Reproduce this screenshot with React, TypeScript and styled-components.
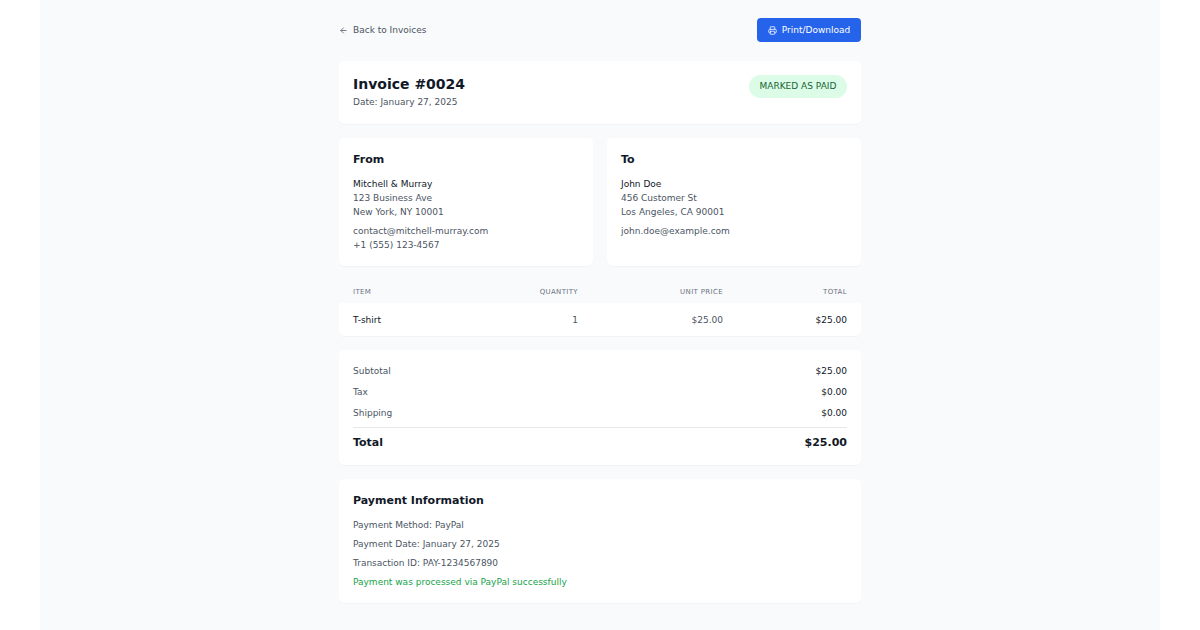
import React from "react";
import styled, { createGlobalStyle } from "styled-components";
import { ArrowLeft, Printer } from "lucide-react";

const GlobalStyle = createGlobalStyle`
  *, *::before, *::after { box-sizing: border-box; }
  body {
    margin: 0;
    background: #ffffff;
    color: #111827;
    font-family: "DejaVu Sans", sans-serif;
    font-size: 9px;
    line-height: 14px;
  }
  h1, h2, p, dl, dd, dt, address { margin: 0; font-style: normal; }
`;

const Page = styled.div`
  max-width: 1120px;
  min-height: 100vh;
  margin: 0 auto;
  padding: 18px 14px;
  background: #f9fafc;
`;

const Content = styled.main`
  display: flex;
  flex-direction: column;
  gap: 14px;
  max-width: 522px;
  margin: 0 auto;
`;

const Toolbar = styled.nav`
  display: flex;
  align-items: center;
  justify-content: space-between;
  margin-bottom: 5px;
`;

const BackLink = styled.a`
  display: inline-flex;
  align-items: center;
  gap: 5px;
  color: #4b5563;
  text-decoration: none;
`;

const PrintButton = styled.button`
  display: inline-flex;
  align-items: center;
  justify-content: center;
  gap: 5px;
  min-width: 104px;
  height: 24px;
  padding: 0 9px;
  border: 0;
  border-radius: 4px;
  background: #2563eb;
  color: #ffffff;
  font: inherit;
  cursor: pointer;
`;

const Card = styled.section`
  padding: 14px;
  border-radius: 5px;
  background: #ffffff;
  box-shadow: 0 1px 1px rgba(0, 0, 0, 0.03);
`;

const HeaderCard = styled(Card)`
  display: flex;
  align-items: flex-start;
  justify-content: space-between;
`;

const Title = styled.h1`
  font-size: 14px;
  line-height: 19px;
  font-weight: 700;
`;

const Muted = styled.p`
  color: #4b5563;
`;

const DateLine = styled(Muted)`
  padding: 1px 0;
`;

const Badge = styled.span`
  min-width: 98px;
  height: 23px;
  padding: 0 9px;
  border-radius: 12px;
  background: #dcfce7;
  color: #166534;
  line-height: 23px;
  text-align: center;
`;

const Parties = styled.div`
  display: grid;
  grid-template-columns: 1fr 1fr;
  gap: 14px;
`;

const Heading = styled.h2`
  margin-bottom: 9px;
  font-size: 11px;
  line-height: 16px;
  font-weight: 600;
`;

const Contact = styled.div`
  margin-top: 5px;
`;

const TableCard = styled(Card)`
  padding: 0;
  overflow: hidden;
`;

const Table = styled.table`
  width: 100%;
  table-layout: fixed;
  border-collapse: collapse;
`;

const Column = styled.col<{ $width?: number }>`
  width: ${({ $width }) => ($width ? `${$width}px` : "auto")};
`;

const HeadCell = styled.th<{ $end?: boolean }>`
  height: 23px;
  padding: 0 14px;
  background: #f9fafc;
  color: #6b7280;
  font-size: 7px;
  line-height: 10px;
  font-weight: 500;
  letter-spacing: 0.05em;
  text-align: ${({ $end }) => ($end ? "right" : "left")};
  text-transform: uppercase;
`;

const Cell = styled.td<{ $end?: boolean; $muted?: boolean }>`
  height: 33px;
  padding: 0 14px;
  color: ${({ $muted }) => ($muted ? "#4b5563" : "#111827")};
  text-align: ${({ $end }) => ($end ? "right" : "left")};
`;

const Totals = styled.dl`
  display: flex;
  flex-direction: column;
  gap: 7px;
`;

const TotalRow = styled.div`
  display: flex;
  justify-content: space-between;

  dt { color: #4b5563; }
`;

const GrandTotal = styled(TotalRow)`
  padding-top: 7px;
  border-top: 1px solid #e5e7eb;
  font-size: 11px;
  line-height: 16px;
  font-weight: 700;

  dt { color: inherit; }
`;

const PaymentDetails = styled.div`
  display: flex;
  flex-direction: column;
  gap: 5px;
`;

const Success = styled.p`
  color: #16a34a;
`;

const parties = [
  {
    label: "From",
    name: "Mitchell & Murray",
    address: ["123 Business Ave", "New York, NY 10001"],
    contact: ["contact@mitchell-murray.com", "+1 (555) 123-4567"],
  },
  {
    label: "To",
    name: "John Doe",
    address: ["456 Customer St", "Los Angeles, CA 90001"],
    contact: ["john.doe@example.com"],
  },
];

const items = [{ name: "T-shirt", quantity: 1, price: "$25.00", total: "$25.00" }];

const charges = [
  ["Subtotal", "$25.00"],
  ["Tax", "$0.00"],
  ["Shipping", "$0.00"],
];

export default function App() {
  return (
    <>
      <GlobalStyle />
      <Page>
        <Content>
          <Toolbar>
            <BackLink href="#invoices">
              <ArrowLeft size={9} aria-hidden />
              Back to Invoices
            </BackLink>
            <PrintButton type="button" onClick={() => window.print()}>
              <Printer size={9} aria-hidden />
              Print/Download
            </PrintButton>
          </Toolbar>

          <HeaderCard>
            <div>
              <Title>Invoice #0024</Title>
              <DateLine>Date: January 27, 2025</DateLine>
            </div>
            <Badge>MARKED AS PAID</Badge>
          </HeaderCard>

          <Parties>
            {parties.map((party) => (
              <Card key={party.label}>
                <Heading>{party.label}</Heading>
                <p>{party.name}</p>
                {party.address.map((line) => (
                  <Muted key={line}>{line}</Muted>
                ))}
                <Contact>
                  {party.contact.map((line) => (
                    <Muted key={line}>{line}</Muted>
                  ))}
                </Contact>
              </Card>
            ))}
          </Parties>

          <TableCard>
            <Table>
              <colgroup>
                <Column />
                <Column $width={120} />
                <Column $width={145} />
                <Column $width={124} />
              </colgroup>
              <thead>
                <tr>
                  <HeadCell scope="col">Item</HeadCell>
                  <HeadCell scope="col" $end>Quantity</HeadCell>
                  <HeadCell scope="col" $end>Unit Price</HeadCell>
                  <HeadCell scope="col" $end>Total</HeadCell>
                </tr>
              </thead>
              <tbody>
                {items.map((item) => (
                  <tr key={item.name}>
                    <Cell>{item.name}</Cell>
                    <Cell $end $muted>{item.quantity}</Cell>
                    <Cell $end $muted>{item.price}</Cell>
                    <Cell $end>{item.total}</Cell>
                  </tr>
                ))}
              </tbody>
            </Table>
          </TableCard>

          <Card>
            <Totals>
              {charges.map(([label, amount]) => (
                <TotalRow key={label}>
                  <dt>{label}</dt>
                  <dd>{amount}</dd>
                </TotalRow>
              ))}
              <GrandTotal>
                <dt>Total</dt>
                <dd>$25.00</dd>
              </GrandTotal>
            </Totals>
          </Card>

          <Card>
            <Heading>Payment Information</Heading>
            <PaymentDetails>
              <Muted>Payment Method: PayPal</Muted>
              <Muted>Payment Date: January 27, 2025</Muted>
              <Muted>Transaction ID: PAY-1234567890</Muted>
              <Success>Payment was processed via PayPal successfully</Success>
            </PaymentDetails>
          </Card>
        </Content>
      </Page>
    </>
  );
}
